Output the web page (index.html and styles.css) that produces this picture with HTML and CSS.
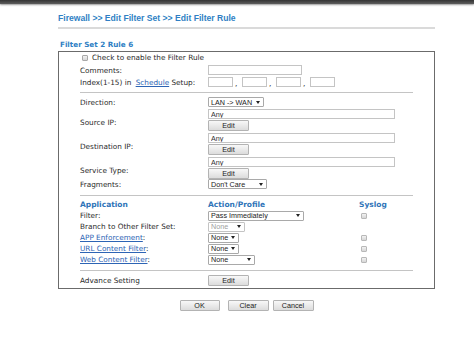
FILE: index.html
```html
<!DOCTYPE html>
<html>
<head>
<meta charset="utf-8">
<title>Edit Filter Rule</title>
<link rel="stylesheet" href="styles.css">
</head>
<body>
<div class="topbar"></div>
<div class="page">
  <div class="title">Firewall &gt;&gt; Edit Filter Set &gt;&gt; Edit Filter Rule</div>
  <div class="rule-line"></div>
  <div class="set-title">Filter Set 2 Rule 6</div>
  <div class="box">
    <div class="row h11"><span class="cb cb-enable"></span><span class="check-text">Check to enable the Filter Rule</span></div>
    <div class="row h12 mt1"><span class="label">Comments:</span><input class="txt w-com" type="text"></div>
    <div class="row h12"><span class="label">Index(1-15) in <a class="link sched">Schedule</a> Setup:</span><input class="txt w-idx" type="text"><span class="comma">,</span><input class="txt w-idx" type="text"><span class="comma">,</span><input class="txt w-idx" type="text"><span class="comma">,</span><input class="txt w-idx" type="text"></div>
    <div class="sep mt4"></div>
    <div class="row h12 mt3"><span class="label">Direction:</span><span class="sel w-dir">LAN -&gt; WAN<svg class="arr" viewBox="0 0 4 3"><path d="M0 0H4L2 3Z"/></svg></span></div>
    <div class="group mt1"><span class="label glabel">Source IP:</span><div class="gval"><input class="txt w-any" type="text" value="Any"><button class="btn btn-edit">Edit</button></div></div>
    <div class="group mt2"><span class="label glabel">Destination IP:</span><div class="gval"><input class="txt w-any" type="text" value="Any"><button class="btn btn-edit">Edit</button></div></div>
    <div class="group mt2"><span class="label glabel">Service Type:</span><div class="gval"><input class="txt w-any" type="text" value="Any"><button class="btn btn-edit">Edit</button></div></div>
    <div class="row h10"><span class="label">Fragments:</span><span class="sel w-frag">Don't Care<svg class="arr" viewBox="0 0 4 3"><path d="M0 0H4L2 3Z"/></svg></span></div>
    <div class="sep mt6"></div>
    <div class="row h11 mt3 head"><span class="label">Application</span><span class="act">Action/Profile</span><span class="sys">Syslog</span></div>
    <div class="row h11"><span class="label">Filter:</span><span class="act"><span class="sel w-pass">Pass Immediately<svg class="arr" viewBox="0 0 4 3"><path d="M0 0H4L2 3Z"/></svg></span></span><span class="sys"><span class="cb cb-sys"></span></span></div>
    <div class="row h11"><span class="label">Branch to Other Filter Set:</span><span class="act"><span class="sel w-branch dis">None<svg class="arr" viewBox="0 0 4 3"><path d="M0 0H4L2 3Z"/></svg></span></span></div>
    <div class="row h11"><span class="label"><a class="link">APP Enforcement</a>:</span><span class="act"><span class="sel w-none">None<svg class="arr" viewBox="0 0 4 3"><path d="M0 0H4L2 3Z"/></svg></span></span><span class="sys"><span class="cb cb-sys"></span></span></div>
    <div class="row h11"><span class="label"><a class="link">URL Content Filter</a>:</span><span class="act"><span class="sel w-none">None<svg class="arr" viewBox="0 0 4 3"><path d="M0 0H4L2 3Z"/></svg></span></span><span class="sys"><span class="cb cb-sys"></span></span></div>
    <div class="row h11"><span class="label"><a class="link">Web Content Filter</a>:</span><span class="act"><span class="sel w-web">None<svg class="arr" viewBox="0 0 4 3"><path d="M0 0H4L2 3Z"/></svg></span></span><span class="sys"><span class="cb cb-sys"></span></span></div>
    <div class="sep mt5"></div>
    <div class="row h12 mt3"><span class="label">Advance Setting</span><button class="btn btn-edit">Edit</button></div>
  </div>
  <div class="actions">
    <button class="btn btn-ok">OK</button>
    <button class="btn btn-clear">Clear</button>
    <button class="btn btn-cancel">Cancel</button>
  </div>
</div>
</body>
</html>
```

FILE: styles.css
```css
* { box-sizing: border-box; }
body {
  margin: 0;
  background: #fff;
  font-family: "DejaVu Sans", Verdana, sans-serif;
  font-size: 7.3px;
  color: #2b2b2b;
}
.topbar {
  height: 4px;
  background: linear-gradient(#333, #5e5e5e);
  box-shadow: 0 1px 2px rgba(0, 0, 0, 0.4);
}
.page {
  margin-left: 58px;
  width: 377px;
}
.title {
  margin-top: 9px;
  height: 11px;
  line-height: 11px;
  font-family: "Liberation Sans", Arial, sans-serif;
  font-weight: bold;
  font-size: 8.6px;
  color: #2f7fc4;
  white-space: nowrap;
}
.rule-line {
  margin-top: 3px;
  height: 2px;
  background: #dadada;
}
.set-title {
  margin-top: 11px;
  margin-bottom: 1px;
  height: 10px;
  line-height: 10px;
  padding-left: 2px;
  font-weight: bold;
  font-size: 7.2px;
  color: #2f7fc4;
  white-space: nowrap;
}
.box {
  border: 1px solid #6b6b6b;
  padding: 0 21px 2px;
}
.row {
  display: flex;
  align-items: center;
}
.h10 { height: 10px; }
.h11 { height: 11px; }
.h12 { height: 12px; }
.mt1 { margin-top: 1px; }
.mt2 { margin-top: 2px; }
.mt3 { margin-top: 3px; }
.mt4 { margin-top: 4px; }
.mt5 { margin-top: 5px; }
.mt6 { margin-top: 6px; }
.label {
  width: 128px;
  flex: none;
  white-space: nowrap;
}
.sep {
  height: 1px;
  background: #c4c4c4;
}
.link {
  color: #2d64b4;
  text-decoration: underline;
}
.sched { margin-left: 2px; }
.cb {
  display: inline-block;
  width: 6px;
  height: 6px;
  border: 1px solid #a8a8a8;
  border-radius: 1px;
  background: linear-gradient(#f2f2f2, #d6d6d6);
}
.cb-enable { margin-left: 2px; }
.check-text { margin-left: 4px; }
.cb-sys { margin-left: 3px; border-color: #b8b8b8; }
.txt {
  height: 10px;
  border: 1px solid #c4c4c4;
  padding: 0 2px;
  margin: 0;
  font: 7.2px "Liberation Sans", Arial, sans-serif;
  color: #333;
  background: #fff;
  outline: none;
}
.w-com { width: 94px; }
.w-idx { width: 25px; }
.w-any { width: 187px; display: block; }
.comma {
  width: 9px;
  flex: none;
  padding-left: 2px;
  align-self: flex-end;
  line-height: 9px;
}
.group {
  display: flex;
  align-items: center;
}
.glabel { padding-top: 4px; }
.gval {
  display: flex;
  flex-direction: column;
  gap: 1px;
}
.btn {
  height: 11px;
  padding: 0;
  margin: 0;
  border: 1px solid #b3b3b3;
  border-radius: 1px;
  background: linear-gradient(#f8f8f8, #dcdcdc);
  font: 7.2px "Liberation Sans", Arial, sans-serif;
  color: #222;
}
.btn-edit { width: 41px; }
.sel {
  display: inline-flex;
  align-items: center;
  justify-content: space-between;
  height: 10px;
  border: 1px solid #a9a9a9;
  border-radius: 1px;
  background: #fff;
  padding: 0 3px 0 2px;
  font: 7.2px "Liberation Sans", Arial, sans-serif;
  color: #222;
  white-space: nowrap;
}
.sel .arr {
  width: 4px;
  height: 3px;
  fill: #222;
  flex: none;
}
.sel.dis { color: #a0a0a0; border-color: #c4c4c4; }
.w-dir { width: 56px; }
.w-frag { width: 59px; }
.w-pass { width: 96px; }
.w-branch { width: 37px; }
.w-none { width: 31px; }
.w-web { width: 47px; }
.act {
  width: 150px;
  flex: none;
  display: flex;
  align-items: center;
}
.sys {
  display: flex;
  align-items: center;
}
.head {
  font-weight: bold;
  font-size: 7.5px;
  color: #2f74b8;
}
.head .sys { margin-left: 1px; }
.actions {
  margin-top: 11px;
  display: flex;
  justify-content: center;
}
.btn-ok { width: 40px; }
.btn-clear { width: 41px; margin-left: 8px; }
.btn-cancel { width: 41px; margin-left: 4px; }
```
